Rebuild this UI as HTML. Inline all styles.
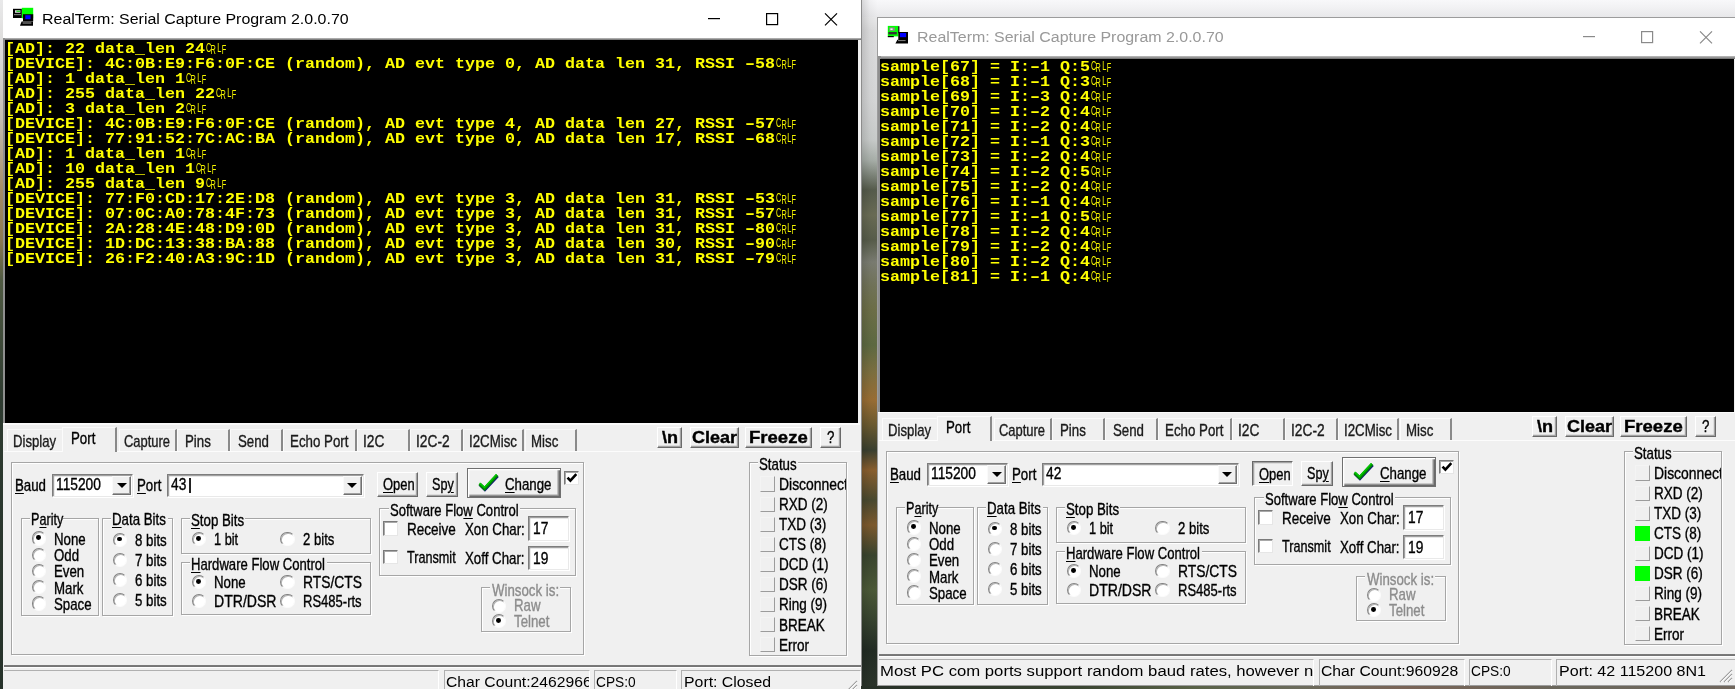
<!DOCTYPE html>
<html><head><meta charset="utf-8"><title>RealTerm</title><style>
*{box-sizing:border-box;margin:0;padding:0}
html,body{width:1735px;height:689px;overflow:hidden}
body{position:relative;font-family:"Liberation Sans", sans-serif;background:#6a6a55;}
.bg{position:absolute;left:0;top:0;width:1735px;height:689px;
 background:linear-gradient(180deg,#f4f4f5 0px,#eaeaeb 17px,#dededf 30px,#d6d7d8 100px,#c9cccb 140px,#a9b0aa 160px,#7c8378 176px,#565c4c 190px,#6a6c55 215px,#585d4b 240px,#7b7d72 262px,#72745a 285px,#6d6f48 310px,#5e6a42 345px,#7d7040 372px,#9a6e34 400px,#6b5a30 425px,#3a4030 450px,#8a5f2e 470px,#4a4a30 500px,#7d5a2e 525px,#3a452f 555px,#4c5a38 590px,#34402e 625px,#222c24 650px,#2c352b 689px);}
.bgl{position:absolute;left:0;top:0;width:4px;height:689px;background:linear-gradient(180deg,#e9e9ea 0px,#d9d8d6 60px,#c4bdb0 120px,#a58d66 190px,#8c7a52 240px,#4f5a42 280px,#2e3b30 400px,#26322a 689px);}
.win{position:absolute;background:#f0f0f0;overflow:hidden}
.tb{position:absolute;left:0;top:0;right:0;background:#fff}
.ttl{position:absolute;white-space:nowrap;font:15.4px/16px "Liberation Sans", sans-serif;transform-origin:0 0}
.term{position:absolute;background:#000;overflow:hidden}
.ln{position:absolute;left:0;height:15px;white-space:pre;font:bold 15px/15px "Liberation Mono", monospace;color:#ffff00;transform:scaleX(1.111);transform-origin:0 0}
.c{display:inline-block;position:relative;width:9.001px;height:15px;vertical-align:top}
.c i,.c b{position:absolute;font:normal 12px/12px "Liberation Sans", sans-serif;color:#f4f400;transform:scaleX(.55);transform-origin:0 0}
.c i{left:1.3px;top:-.4px}
.c b{left:5.4px;top:1.8px}
.c.d i{left:1.9px}
.c.d b{left:6.1px}
.h{display:inline-block;transform:scaleX(1.55)}
.pan{position:absolute;width:0;height:0}
.l{position:absolute;white-space:nowrap;font:15.7px/16px "Liberation Sans", sans-serif;color:#000;transform-origin:0 0;transform:scaleX(.846);-webkit-text-stroke-width:.35px;filter:blur(.35px)}
.l u{text-decoration:underline;text-decoration-thickness:1px;text-underline-offset:1.5px}
.g{position:absolute;border:1px solid #a6a6a6;box-shadow:1px 1px 0 #fff,inset 1px 1px 0 #fff}
.gl{position:absolute;background:#f0f0f0;height:14px}
.r{position:absolute;width:14.4px;height:14.4px;border-radius:50%;background:#fff;border:1.6px solid;border-color:#838383 #fbfbfb #fbfbfb #838383;box-shadow:inset .9px .9px 0 #b4b4b4}
.r.on::after{content:"";position:absolute;left:3.2px;top:3.2px;width:4.8px;height:4.8px;border-radius:50%;background:#000}
.cb{position:absolute;background:#fff;border:1.5px solid;border-color:#7a7a7a #e6e6e6 #e6e6e6 #7a7a7a;box-shadow:inset 1px 1px 0 #a8a8a8}
.ed{position:absolute;background:#fff;border:1.5px solid;border-color:#7d7d7d #e9e9e9 #e9e9e9 #7d7d7d;box-shadow:inset 1.2px 1.2px 0 #a0a0a0,1px 1px 0 #fff}
.bt{position:absolute;background:#f0f0f0;border:1.3px solid;border-color:#fff #6a6a6a #6a6a6a #fff;box-shadow:inset -1.2px -1.2px 0 #a3a3a3}
.dd{position:absolute;background:#f0f0f0;border:1.2px solid;border-color:#fafafa #707070 #707070 #fafafa;box-shadow:inset -1px -1px 0 #a0a0a0}
.dd::after{content:"";position:absolute;left:50%;top:50%;margin:-2.4px 0 0 -5px;border:5px solid transparent;border-top:5.4px solid #000;border-bottom:0}
.tab{position:absolute;background:#f0f0f0;border-left:1.3px solid #fbfbfb;border-top:1.3px solid #fbfbfb;border-right:2.4px solid #8a8a8a}
.led{position:absolute;width:15.6px;height:15.2px;background:#f0f0f0;border:1.4px solid;border-color:#f4f4f4 #9c9c9c #9c9c9c #f4f4f4}
.led.on{background:#00ff00;border-color:#00ff00}
.sb{position:absolute;background:#f0f0f0}
.sp{position:absolute;border-top:1.3px solid #b0b0b0;border-left:1.3px solid #b0b0b0;border-right:1px solid #fff;overflow:hidden}
.st{position:absolute;white-space:nowrap;font:15.5px/16px "Liberation Sans", sans-serif;color:#000;transform-origin:0 0}
</style></head><body>
<div class="bg"></div><div class="bgl"></div>
<div style="position:absolute;left:861px;top:0;width:874px;height:17px;background:linear-gradient(180deg,#f8f8fa,#f1f1f3 8px,#e8e8ea)"></div>
<div style="position:absolute;left:862px;top:0;width:16px;height:689px;background:linear-gradient(90deg,rgba(0,0,0,.13),rgba(0,0,0,.03) 8px,rgba(0,0,0,0))"></div>
<div class="win" style="left:3.4px;top:-1px;width:857.6px;height:700px"></div>
<div style="position:absolute;left:3.4px;top:0;width:857.6px;height:38px;background:#fff"></div>
<svg style="position:absolute;left:12px;top:7px" width="23" height="20" viewBox="0 0 23 20"><rect x="9.8" y="0.8" width="11.4" height="10.5" fill="#00ff00"/><rect x="1" y="1.8" width="8.8" height="9.2" fill="#000"/><rect x="3" y="3.2" width="5.4" height="2.6" fill="#d8d8d8"/><rect x="4.4" y="3.6" width="3.6" height="1.4" fill="#30d030"/><rect x="2" y="7" width="7" height="1.2" fill="#777"/><rect x="11" y="7.2" width="10.2" height="7.2" fill="#000"/><rect x="13.3" y="8.2" width="5.3" height="4" fill="#0000ff"/><path d="M9.6 14.4 H21 V18.8 H8 Z" fill="#000"/><path d="M10.6 16 H19.4" stroke="#ccc" stroke-width=".8"/></svg>
<span class="ttl" style="left:41.9px;top:11.3px;color:#000;transform:scaleX(1.036)">RealTerm: Serial Capture Program 2.0.0.70</span>
<svg style="position:absolute;left:708px;top:12.6px" width="132" height="14" viewBox="0 0 132 14" fill="none" stroke="#000" stroke-width="1.2"><path d="M0 5.6 H12"/><rect x="58.6" y="0.6" width="11" height="11"/><path d="M117 0.4 L129 12.4 M129 0.4 L117 12.4"/></svg>
<div style="position:absolute;left:3.4px;top:38.1px;width:857.6px;height:2.2px;background:linear-gradient(#c0c0c0,#6b6b6b)"></div>
<div style="position:absolute;left:3.4px;top:38.4px;width:1.8px;height:385px;background:#8f8f8f"></div>
<div style="position:absolute;left:3.4px;top:423px;width:857px;height:1.6px;background:#fbfbfb"></div>
<div class="term" style="left:5px;top:40px;width:853.4px;height:383px">
<div class="ln" style="top:2.0px">[AD]: 22 data_len 24<span class="c"><i>C</i><b>R</b></span><span class="c d"><i>L</i><b>F</b></span></div>
<div class="ln" style="top:17.0px">[DEVICE]: 4C:0B:E9:F6:0F:CE (random), AD evt type 0, AD data len 31, RSSI <span class="h">-</span>58<span class="c"><i>C</i><b>R</b></span><span class="c d"><i>L</i><b>F</b></span></div>
<div class="ln" style="top:32.0px">[AD]: 1 data_len 1<span class="c"><i>C</i><b>R</b></span><span class="c d"><i>L</i><b>F</b></span></div>
<div class="ln" style="top:47.0px">[AD]: 255 data_len 22<span class="c"><i>C</i><b>R</b></span><span class="c d"><i>L</i><b>F</b></span></div>
<div class="ln" style="top:62.0px">[AD]: 3 data_len 2<span class="c"><i>C</i><b>R</b></span><span class="c d"><i>L</i><b>F</b></span></div>
<div class="ln" style="top:77.0px">[DEVICE]: 4C:0B:E9:F6:0F:CE (random), AD evt type 4, AD data len 27, RSSI <span class="h">-</span>57<span class="c"><i>C</i><b>R</b></span><span class="c d"><i>L</i><b>F</b></span></div>
<div class="ln" style="top:92.0px">[DEVICE]: 77:91:52:7C:AC:BA (random), AD evt type 0, AD data len 17, RSSI <span class="h">-</span>68<span class="c"><i>C</i><b>R</b></span><span class="c d"><i>L</i><b>F</b></span></div>
<div class="ln" style="top:107.0px">[AD]: 1 data_len 1<span class="c"><i>C</i><b>R</b></span><span class="c d"><i>L</i><b>F</b></span></div>
<div class="ln" style="top:122.0px">[AD]: 10 data_len 1<span class="c"><i>C</i><b>R</b></span><span class="c d"><i>L</i><b>F</b></span></div>
<div class="ln" style="top:137.0px">[AD]: 255 data_len 9<span class="c"><i>C</i><b>R</b></span><span class="c d"><i>L</i><b>F</b></span></div>
<div class="ln" style="top:152.0px">[DEVICE]: 77:F0:CD:17:2E:D8 (random), AD evt type 3, AD data len 31, RSSI <span class="h">-</span>53<span class="c"><i>C</i><b>R</b></span><span class="c d"><i>L</i><b>F</b></span></div>
<div class="ln" style="top:167.0px">[DEVICE]: 07:0C:A0:78:4F:73 (random), AD evt type 3, AD data len 31, RSSI <span class="h">-</span>57<span class="c"><i>C</i><b>R</b></span><span class="c d"><i>L</i><b>F</b></span></div>
<div class="ln" style="top:182.0px">[DEVICE]: 2A:28:4E:48:D9:0D (random), AD evt type 3, AD data len 31, RSSI <span class="h">-</span>80<span class="c"><i>C</i><b>R</b></span><span class="c d"><i>L</i><b>F</b></span></div>
<div class="ln" style="top:197.0px">[DEVICE]: 1D:DC:13:38:BA:88 (random), AD evt type 3, AD data len 30, RSSI <span class="h">-</span>90<span class="c"><i>C</i><b>R</b></span><span class="c d"><i>L</i><b>F</b></span></div>
<div class="ln" style="top:212.0px">[DEVICE]: 26:F2:40:A3:9C:1D (random), AD evt type 3, AD data len 31, RSSI <span class="h">-</span>79<span class="c"><i>C</i><b>R</b></span><span class="c d"><i>L</i><b>F</b></span></div>
</div>
<div style="position:absolute;left:861px;top:0;width:1px;height:689px;background:#8c8c8c"></div>
<div class="pan" style="left:0px;top:0px">
<div style="position:absolute;left:4px;top:451.2px;width:856px;height:1.3px;background:#fcfcfc"></div>
<div class="tab" style="left:7px;top:429.3px;width:55.5px;height:21.899999999999977px;border-right-color:#f0f0f0;"></div>
<span class="l" style="left:13.0px;top:433.5px;transform:scaleX(0.836);color:#1a1a1a;">Display</span>
<div class="tab" style="left:62px;top:426.8px;width:55.3px;height:25.399999999999977px;"></div>
<span class="l" style="left:71.0px;top:431.1px;color:#000;">Port</span>
<div class="tab" style="left:119px;top:429.3px;width:57.5px;height:21.899999999999977px;"></div>
<span class="l" style="left:123.6px;top:433.5px;transform:scaleX(0.825);color:#1a1a1a;">Capture</span>
<div class="tab" style="left:177px;top:429.3px;width:52.5px;height:21.899999999999977px;"></div>
<span class="l" style="left:184.5px;top:433.5px;color:#1a1a1a;">Pins</span>
<div class="tab" style="left:230px;top:429.3px;width:52.5px;height:21.899999999999977px;"></div>
<span class="l" style="left:237.5px;top:433.5px;color:#1a1a1a;">Send</span>
<div class="tab" style="left:283px;top:429.3px;width:73.5px;height:21.899999999999977px;"></div>
<span class="l" style="left:290.0px;top:433.5px;transform:scaleX(0.849);color:#1a1a1a;">Echo Port</span>
<div class="tab" style="left:357px;top:429.3px;width:52.5px;height:21.899999999999977px;"></div>
<span class="l" style="left:363.0px;top:433.5px;transform:scaleX(0.876);color:#1a1a1a;">I2C</span>
<div class="tab" style="left:410px;top:429.3px;width:52.5px;height:21.899999999999977px;"></div>
<span class="l" style="left:416.0px;top:433.5px;transform:scaleX(0.876);color:#1a1a1a;">I2C-2</span>
<div class="tab" style="left:463px;top:429.3px;width:61.10000000000002px;height:21.899999999999977px;"></div>
<span class="l" style="left:468.5px;top:433.5px;color:#1a1a1a;">I2CMisc</span>
<div class="tab" style="left:525px;top:429.3px;width:51.5px;height:21.899999999999977px;"></div>
<span class="l" style="left:531.0px;top:433.5px;color:#1a1a1a;">Misc</span>
<div class="bt" style="left:657.3px;top:427px;width:24.700000000000045px;height:20.6px;overflow:hidden"></div>
<span class="l" style="left:662.0px;top:430.2px;transform:scaleX(1.151);font-weight:bold;">\n</span>
<div class="bt" style="left:689.8px;top:427px;width:49.60000000000002px;height:20.6px;overflow:hidden"></div>
<span class="l" style="left:692.3px;top:430.2px;transform:scaleX(1.146);font-weight:bold;">Clear</span>
<div class="bt" style="left:745px;top:427px;width:66.70000000000005px;height:20.6px;overflow:hidden"></div>
<span class="l" style="left:749.0px;top:430.2px;transform:scaleX(1.182);font-weight:bold;">Freeze</span>
<div class="bt" style="left:820px;top:427px;width:20.799999999999955px;height:20.6px;overflow:hidden"></div>
<span class="l" style="left:827.0px;top:429.7px;">?</span>
<div class="g" style="left:10.6px;top:461.6px;width:573.6px;height:193.6px"></div>
<span class="l" style="left:15.0px;top:478.2px;"><u>B</u>aud</span>
<div class="ed" style="left:52px;top:473.6px;width:81.2px;height:23.6px"></div>
<span class="l" style="left:56.0px;top:476.8px;transform:scaleX(0.878);">115200</span>
<div class="dd" style="left:112.3px;top:476px;width:18.8px;height:19px"></div>
<span class="l" style="left:137.0px;top:478.2px;"><u>P</u>ort</span>
<div class="ed" style="left:167px;top:473.6px;width:196.6px;height:23.6px"></div>
<span class="l" style="left:171.0px;top:476.8px;transform:scaleX(0.878);">43</span>
<div style="position:absolute;left:189.3px;top:477.5px;width:1.3px;height:15px;background:#222"></div>
<div class="dd" style="left:342.8px;top:476px;width:18.8px;height:19px"></div>
<div class="bt" style="left:377px;top:472px;width:41.3px;height:25px"></div>
<span class="l" style="left:383.0px;top:477.3px;transform:scaleX(0.825);"><u>O</u>pen</span>
<div class="bt" style="left:426px;top:472px;width:32.3px;height:25px"></div>
<span class="l" style="left:431.7px;top:477.3px;transform:scaleX(0.805);">Sp<u>y</u></span>
<div class="bt" style="left:467px;top:468px;width:93.6px;height:29.8px;border-color:#6f6f6f;border-width:1.3px;box-shadow:inset 1.3px 1.3px 0 #fff,inset -1.3px -1.3px 0 #6a6a6a,inset -2.6px -2.6px 0 #a3a3a3"></div>
<svg style="position:absolute;left:477px;top:472px" width="24" height="22" viewBox="0 0 24 22" fill="none" stroke-linejoin="miter"><path d="M2.9 12.6 L7.9 17.5 L20.6 3.9" stroke="#10107a" stroke-width="3.2"/><path d="M2.5 11.9 L7.6 16.7 L20.1 3" stroke="#008a00" stroke-width="3.3"/><path d="M2.6 11 L7.5 15.5 L19.6 2.4" stroke="#00d000" stroke-width="1.3"/></svg>
<span class="l" style="left:505.0px;top:476.7px;"><u>C</u>hange</span>
<div class="cb" style="left:563.6px;top:470.7px;width:15.6px;height:14.8px"></div>
<svg style="position:absolute;left:565.5px;top:472.6px" width="12" height="11" viewBox="0 0 12 11"><path d="M1.5 4.6 L4.4 7.6 L10.3 1.2" fill="none" stroke="#000" stroke-width="2.6"/></svg>
<div class="g" style="left:21.0px;top:518.0px;width:78.0px;height:98.0px"></div>
<div class="gl" style="left:29.5px;top:512.0px;width:33.4px"></div>
<span class="l" style="left:31.0px;top:512.4px;transform:scaleX(0.805);">P<u>a</u>rity</span>
<div class="r on" style="left:31.8px;top:531.2px"></div>
<span class="l" style="left:54.0px;top:531.8px;">None</span>
<div class="r" style="left:31.8px;top:547.5px"></div>
<span class="l" style="left:54.0px;top:548.1px;">Odd</span>
<div class="r" style="left:31.8px;top:563.7px"></div>
<span class="l" style="left:54.0px;top:564.3px;">Even</span>
<div class="r" style="left:31.8px;top:580.0px"></div>
<span class="l" style="left:54.0px;top:580.6px;">Mark</span>
<div class="r" style="left:31.8px;top:596.2px"></div>
<span class="l" style="left:54.0px;top:596.8px;">Space</span>
<div class="g" style="left:102.0px;top:518.0px;width:71.0px;height:98.0px"></div>
<div class="gl" style="left:110.5px;top:512.0px;width:57.0px"></div>
<span class="l" style="left:112.0px;top:512.4px;"><u>D</u>ata Bits</span>
<div class="r on" style="left:113.0px;top:532.5px"></div>
<span class="l" style="left:135.0px;top:532.5px;">8 bits</span>
<div class="r" style="left:113.0px;top:552.6px"></div>
<span class="l" style="left:135.0px;top:552.6px;">7 bits</span>
<div class="r" style="left:113.0px;top:572.6px"></div>
<span class="l" style="left:135.0px;top:572.6px;">6 bits</span>
<div class="r" style="left:113.0px;top:592.7px"></div>
<span class="l" style="left:135.0px;top:592.7px;">5 bits</span>
<div class="g" style="left:181.0px;top:518.0px;width:190.0px;height:36.0px"></div>
<div class="gl" style="left:189.5px;top:512.0px;width:55.0px"></div>
<span class="l" style="left:191.0px;top:513.0px;"><u>S</u>top Bits</span>
<div class="r on" style="left:191.8px;top:532.1px"></div>
<span class="l" style="left:214.0px;top:532.1px;transform:scaleX(0.815);">1 bit</span>
<div class="r" style="left:280.3px;top:532.1px"></div>
<span class="l" style="left:302.5px;top:532.1px;transform:scaleX(0.836);">2 bits</span>
<div class="g" style="left:181.0px;top:562.0px;width:190.0px;height:53.4px"></div>
<div class="gl" style="left:189.5px;top:556.0px;width:137.0px"></div>
<span class="l" style="left:191.0px;top:557.3px;transform:scaleX(0.835);"><u>H</u>ardware Flow Control</span>
<div class="r on" style="left:191.8px;top:574.7px"></div>
<span class="l" style="left:214.0px;top:574.9px;">None</span>
<div class="r" style="left:280.3px;top:574.7px"></div>
<span class="l" style="left:302.5px;top:574.9px;transform:scaleX(0.882);">RTS/CTS</span>
<div class="r" style="left:191.8px;top:593.9px"></div>
<span class="l" style="left:213.5px;top:594.1px;transform:scaleX(0.896);">DTR/DSR</span>
<div class="r" style="left:280.3px;top:593.9px"></div>
<span class="l" style="left:302.5px;top:594.1px;transform:scaleX(0.830);">RS485-rts</span>
<div class="g" style="left:379.0px;top:508.0px;width:197.0px;height:68.0px"></div>
<div class="gl" style="left:388.5px;top:502.0px;width:131.6px"></div>
<span class="l" style="left:390.0px;top:503.2px;transform:scaleX(0.833);">Software Flo<u>w</u> Control</span>
<div class="cb" style="left:383.2px;top:521px;width:15.3px;height:14.6px"></div>
<span class="l" style="left:406.7px;top:521.6px;transform:scaleX(0.861);">Receive</span>
<span class="l" style="left:465.4px;top:522.2px;">Xon Char:</span>
<div class="ed" style="left:528px;top:516px;width:41.2px;height:24.8px"></div>
<span class="l" style="left:533.0px;top:521.2px;transform:scaleX(0.878);">17</span>
<div class="cb" style="left:383.2px;top:549.8px;width:15.3px;height:14.6px"></div>
<span class="l" style="left:406.7px;top:549.8px;transform:scaleX(0.805);">Transmit</span>
<span class="l" style="left:465.4px;top:551.0px;">Xoff Char:</span>
<div class="ed" style="left:528px;top:545.6px;width:41.2px;height:24.8px"></div>
<span class="l" style="left:533.0px;top:550.5px;transform:scaleX(0.878);">19</span>
<div class="g" style="left:481.0px;top:587.0px;width:90.0px;height:45.2px"></div>
<div class="gl" style="left:490.3px;top:581.0px;width:69.6px"></div>
<span class="l" style="left:491.8px;top:582.6px;color:#8c8c8c;">Winsock is:</span>
<div class="r" style="left:492.0px;top:598.5px"></div>
<span class="l" style="left:514.2px;top:598.3px;color:#8c8c8c;">Raw</span>
<div class="r on" style="left:492.0px;top:613.6px"></div>
<span class="l" style="left:514.2px;top:613.5px;color:#8c8c8c;">Telnet</span>
<div class="g" style="left:749.0px;top:462.0px;width:98.0px;height:194.0px"></div>
<div class="gl" style="left:757.5px;top:456.0px;width:40.3px"></div>
<span class="l" style="left:759.0px;top:457.4px;">Status</span>
<div class="led" style="left:759.5px;top:476.4px"></div>
<span class="l" style="left:779.2px;top:477.0px;transform:scaleX(0.887);">Disconnect</span>
<div class="led" style="left:759.5px;top:496.5px"></div>
<span class="l" style="left:779.2px;top:497.1px;transform:scaleX(0.861);">RXD (2)</span>
<div class="led" style="left:759.5px;top:516.5px"></div>
<span class="l" style="left:779.2px;top:517.1px;transform:scaleX(0.861);">TXD (3)</span>
<div class="led" style="left:759.5px;top:536.6px"></div>
<span class="l" style="left:779.2px;top:537.2px;transform:scaleX(0.861);">CTS (8)</span>
<div class="led" style="left:759.5px;top:556.7px"></div>
<span class="l" style="left:779.2px;top:557.3px;transform:scaleX(0.861);">DCD (1)</span>
<div class="led" style="left:759.5px;top:576.8px"></div>
<span class="l" style="left:779.2px;top:577.4px;transform:scaleX(0.861);">DSR (6)</span>
<div class="led" style="left:759.5px;top:596.8px"></div>
<span class="l" style="left:779.2px;top:597.4px;transform:scaleX(0.861);">Ring (9)</span>
<div class="led" style="left:759.5px;top:616.9px"></div>
<span class="l" style="left:779.2px;top:617.5px;transform:scaleX(0.861);">BREAK</span>
<div class="led" style="left:759.5px;top:637.0px"></div>
<span class="l" style="left:779.2px;top:637.6px;transform:scaleX(0.861);">Error</span>
<div style="position:absolute;left:845.6px;top:470px;width:1px;height:30px;background:#a6a6a6"></div><div style="position:absolute;left:846.6px;top:470px;width:14px;height:30px;background:#f0f0f0"></div><div style="position:absolute;left:846.6px;top:470px;width:1px;height:30px;background:#fff"></div>
</div>
<div class="sb" style="left:4px;top:664.6px;width:857px;height:30px">
<div style="position:absolute;left:0;top:0;width:100%;height:2.2px;background:linear-gradient(#8c8c8c,#5f5f5f 60%,#9a9a9a)"></div>
<div style="position:absolute;left:0;top:2.2px;width:100%;height:1.2px;background:#fdfdfd"></div>
<div class="sp" style="left:0px;top:5px;width:435.4px;height:30px;border-left:0;"><span class="st" style="left:-5.3px;top:3.7px;transform:scaleX(1)"></span></div>
<div class="sp" style="left:439.6px;top:5px;width:146.39999999999998px;height:30px;"><span class="st" style="left:1.8px;top:3.7px;transform:scaleX(1.012)">Char Count:2462966</span></div>
<div class="sp" style="left:589.6px;top:5px;width:83.29999999999995px;height:30px;"><span class="st" style="left:1.5px;top:3.7px;transform:scaleX(0.885)">CPS:0</span></div>
<div class="sp" style="left:677px;top:5px;width:180px;height:30px;"><span class="st" style="left:1.5px;top:3.7px;transform:scaleX(1.022)">Port: Closed</span></div>
<svg style="position:absolute;left:838px;top:13px" width="16" height="16" viewBox="0 0 16 16"><path d="M15 3 L3 15 M15 7 L7 15 M15 11 L11 15" stroke="#a0a0a0" stroke-width="1.2"/><path d="M15 4.2 L4.2 15 M15 8.2 L8.2 15 M15 12.2 L12.2 15" stroke="#fff" stroke-width="1"/></svg>
</div>
<div class="win" style="left:877px;top:17px;width:858px;height:668.6px;border:1px solid #9c9c9c;border-right:0"></div>
<div style="position:absolute;left:878px;top:18px;width:857px;height:38px;background:#fff"></div>
<svg style="position:absolute;left:887px;top:25px" width="22" height="20" viewBox="0 0 22 20"><rect x="0.8" y="0.9" width="10.6" height="10.5" fill="#00ff00"/><rect x="11.2" y="1.2" width="1.2" height="7" fill="#000"/><rect x="0.8" y="11" width="6" height="1.2" fill="#000"/><rect x="2.2" y="2.4" width="5.6" height="3.4" fill="#8a8a8a"/><rect x="3.4" y="3.4" width="2.2" height="1.6" fill="#f0f0f0"/><rect x="1.4" y="7" width="8.4" height="2.4" fill="#333"/><rect x="11.3" y="7" width="9.7" height="8.2" fill="#000"/><rect x="13" y="8" width="6.1" height="4.2" fill="#0000ff"/><path d="M10.4 14.8 H21 V18.4 H8.4 Z" fill="#000"/><path d="M11 15.6 H18.6" stroke="#bbb" stroke-width=".7"/></svg>
<span class="ttl" style="left:916.9px;top:29.4px;color:#999;transform:scaleX(1.036)">RealTerm: Serial Capture Program 2.0.0.70</span>
<svg style="position:absolute;left:1583px;top:30.6px" width="132" height="14" viewBox="0 0 132 14" fill="none" stroke="#8a8a8a" stroke-width="1.2"><path d="M0 5.6 H12"/><rect x="58.6" y="0.6" width="11" height="11"/><path d="M117 0.4 L129 12.4 M129 0.4 L117 12.4"/></svg>
<div style="position:absolute;left:878px;top:55.8px;width:857px;height:3px;background:linear-gradient(#c0c0c0,#6b6b6b)"></div>
<div style="position:absolute;left:878px;top:56.2px;width:2.6px;height:356px;background:#8f8f8f"></div>
<div style="position:absolute;left:878px;top:411.8px;width:857px;height:1.6px;background:#fbfbfb"></div>
<div class="term" style="left:880.4px;top:58.6px;width:853.2px;height:353.2px">
<div class="ln" style="top:1.6px">sample[67] = I:<span class="h">-</span>1 Q:5<span class="c"><i>C</i><b>R</b></span><span class="c d"><i>L</i><b>F</b></span></div>
<div class="ln" style="top:16.6px">sample[68] = I:<span class="h">-</span>1 Q:3<span class="c"><i>C</i><b>R</b></span><span class="c d"><i>L</i><b>F</b></span></div>
<div class="ln" style="top:31.6px">sample[69] = I:<span class="h">-</span>3 Q:4<span class="c"><i>C</i><b>R</b></span><span class="c d"><i>L</i><b>F</b></span></div>
<div class="ln" style="top:46.6px">sample[70] = I:<span class="h">-</span>2 Q:4<span class="c"><i>C</i><b>R</b></span><span class="c d"><i>L</i><b>F</b></span></div>
<div class="ln" style="top:61.6px">sample[71] = I:<span class="h">-</span>2 Q:4<span class="c"><i>C</i><b>R</b></span><span class="c d"><i>L</i><b>F</b></span></div>
<div class="ln" style="top:76.6px">sample[72] = I:<span class="h">-</span>1 Q:3<span class="c"><i>C</i><b>R</b></span><span class="c d"><i>L</i><b>F</b></span></div>
<div class="ln" style="top:91.6px">sample[73] = I:<span class="h">-</span>2 Q:4<span class="c"><i>C</i><b>R</b></span><span class="c d"><i>L</i><b>F</b></span></div>
<div class="ln" style="top:106.6px">sample[74] = I:<span class="h">-</span>2 Q:5<span class="c"><i>C</i><b>R</b></span><span class="c d"><i>L</i><b>F</b></span></div>
<div class="ln" style="top:121.6px">sample[75] = I:<span class="h">-</span>2 Q:4<span class="c"><i>C</i><b>R</b></span><span class="c d"><i>L</i><b>F</b></span></div>
<div class="ln" style="top:136.6px">sample[76] = I:<span class="h">-</span>1 Q:4<span class="c"><i>C</i><b>R</b></span><span class="c d"><i>L</i><b>F</b></span></div>
<div class="ln" style="top:151.6px">sample[77] = I:<span class="h">-</span>1 Q:5<span class="c"><i>C</i><b>R</b></span><span class="c d"><i>L</i><b>F</b></span></div>
<div class="ln" style="top:166.6px">sample[78] = I:<span class="h">-</span>2 Q:4<span class="c"><i>C</i><b>R</b></span><span class="c d"><i>L</i><b>F</b></span></div>
<div class="ln" style="top:181.6px">sample[79] = I:<span class="h">-</span>2 Q:4<span class="c"><i>C</i><b>R</b></span><span class="c d"><i>L</i><b>F</b></span></div>
<div class="ln" style="top:196.6px">sample[80] = I:<span class="h">-</span>2 Q:4<span class="c"><i>C</i><b>R</b></span><span class="c d"><i>L</i><b>F</b></span></div>
<div class="ln" style="top:211.6px">sample[81] = I:<span class="h">-</span>1 Q:4<span class="c"><i>C</i><b>R</b></span><span class="c d"><i>L</i><b>F</b></span></div>
</div>
<div class="pan" style="left:875px;top:-11px">
<div style="position:absolute;left:4px;top:451.2px;width:856px;height:1.3px;background:#fcfcfc"></div>
<div class="tab" style="left:7px;top:429.3px;width:55.5px;height:21.899999999999977px;border-right-color:#f0f0f0;"></div>
<span class="l" style="left:13.0px;top:433.5px;transform:scaleX(0.836);color:#1a1a1a;">Display</span>
<div class="tab" style="left:62px;top:426.8px;width:55.3px;height:25.399999999999977px;"></div>
<span class="l" style="left:71.0px;top:431.1px;color:#000;">Port</span>
<div class="tab" style="left:119px;top:429.3px;width:57.5px;height:21.899999999999977px;"></div>
<span class="l" style="left:123.6px;top:433.5px;transform:scaleX(0.825);color:#1a1a1a;">Capture</span>
<div class="tab" style="left:177px;top:429.3px;width:52.5px;height:21.899999999999977px;"></div>
<span class="l" style="left:184.5px;top:433.5px;color:#1a1a1a;">Pins</span>
<div class="tab" style="left:230px;top:429.3px;width:52.5px;height:21.899999999999977px;"></div>
<span class="l" style="left:237.5px;top:433.5px;color:#1a1a1a;">Send</span>
<div class="tab" style="left:283px;top:429.3px;width:73.5px;height:21.899999999999977px;"></div>
<span class="l" style="left:290.0px;top:433.5px;transform:scaleX(0.849);color:#1a1a1a;">Echo Port</span>
<div class="tab" style="left:357px;top:429.3px;width:52.5px;height:21.899999999999977px;"></div>
<span class="l" style="left:363.0px;top:433.5px;transform:scaleX(0.876);color:#1a1a1a;">I2C</span>
<div class="tab" style="left:410px;top:429.3px;width:52.5px;height:21.899999999999977px;"></div>
<span class="l" style="left:416.0px;top:433.5px;transform:scaleX(0.876);color:#1a1a1a;">I2C-2</span>
<div class="tab" style="left:463px;top:429.3px;width:61.10000000000002px;height:21.899999999999977px;"></div>
<span class="l" style="left:468.5px;top:433.5px;color:#1a1a1a;">I2CMisc</span>
<div class="tab" style="left:525px;top:429.3px;width:51.5px;height:21.899999999999977px;"></div>
<span class="l" style="left:531.0px;top:433.5px;color:#1a1a1a;">Misc</span>
<div class="bt" style="left:657.3px;top:427px;width:24.700000000000045px;height:20.6px;overflow:hidden"></div>
<span class="l" style="left:662.0px;top:430.2px;transform:scaleX(1.151);font-weight:bold;">\n</span>
<div class="bt" style="left:689.8px;top:427px;width:49.60000000000002px;height:20.6px;overflow:hidden"></div>
<span class="l" style="left:692.3px;top:430.2px;transform:scaleX(1.146);font-weight:bold;">Clear</span>
<div class="bt" style="left:745px;top:427px;width:66.70000000000005px;height:20.6px;overflow:hidden"></div>
<span class="l" style="left:749.0px;top:430.2px;transform:scaleX(1.182);font-weight:bold;">Freeze</span>
<div class="bt" style="left:820px;top:427px;width:20.799999999999955px;height:20.6px;overflow:hidden"></div>
<span class="l" style="left:827.0px;top:429.7px;">?</span>
<div class="g" style="left:10.6px;top:461.6px;width:573.6px;height:193.6px"></div>
<span class="l" style="left:15.0px;top:478.2px;"><u>B</u>aud</span>
<div class="ed" style="left:52px;top:473.6px;width:81.2px;height:23.6px"></div>
<span class="l" style="left:56.0px;top:476.8px;transform:scaleX(0.878);">115200</span>
<div class="dd" style="left:112.3px;top:476px;width:18.8px;height:19px"></div>
<span class="l" style="left:137.0px;top:478.2px;"><u>P</u>ort</span>
<div class="ed" style="left:167px;top:473.6px;width:196.6px;height:23.6px"></div>
<span class="l" style="left:171.0px;top:476.8px;transform:scaleX(0.878);">42</span>
<div class="dd" style="left:342.8px;top:476px;width:18.8px;height:19px"></div>
<div class="bt" style="left:377px;top:472px;width:41.3px;height:25px;border-color:#6a6a6a #fff #fff #6a6a6a;box-shadow:inset 1.3px 1.3px 0 #a3a3a3"></div>
<span class="l" style="left:384.0px;top:478.3px;transform:scaleX(0.825);"><u>O</u>pen</span>
<div class="bt" style="left:426px;top:472px;width:32.3px;height:25px"></div>
<span class="l" style="left:431.7px;top:477.3px;transform:scaleX(0.805);">Sp<u>y</u></span>
<div class="bt" style="left:467px;top:468px;width:93.6px;height:29.8px;border-color:#6f6f6f;border-width:1.3px;box-shadow:inset 1.3px 1.3px 0 #fff,inset -1.3px -1.3px 0 #6a6a6a,inset -2.6px -2.6px 0 #a3a3a3"></div>
<svg style="position:absolute;left:477px;top:472px" width="24" height="22" viewBox="0 0 24 22" fill="none" stroke-linejoin="miter"><path d="M2.9 12.6 L7.9 17.5 L20.6 3.9" stroke="#10107a" stroke-width="3.2"/><path d="M2.5 11.9 L7.6 16.7 L20.1 3" stroke="#008a00" stroke-width="3.3"/><path d="M2.6 11 L7.5 15.5 L19.6 2.4" stroke="#00d000" stroke-width="1.3"/></svg>
<span class="l" style="left:505.0px;top:476.7px;"><u>C</u>hange</span>
<div class="cb" style="left:563.6px;top:470.7px;width:15.6px;height:14.8px"></div>
<svg style="position:absolute;left:565.5px;top:472.6px" width="12" height="11" viewBox="0 0 12 11"><path d="M1.5 4.6 L4.4 7.6 L10.3 1.2" fill="none" stroke="#000" stroke-width="2.6"/></svg>
<div class="g" style="left:21.0px;top:518.0px;width:78.0px;height:98.0px"></div>
<div class="gl" style="left:29.5px;top:512.0px;width:33.4px"></div>
<span class="l" style="left:31.0px;top:512.4px;transform:scaleX(0.805);">P<u>a</u>rity</span>
<div class="r on" style="left:31.8px;top:531.2px"></div>
<span class="l" style="left:54.0px;top:531.8px;">None</span>
<div class="r" style="left:31.8px;top:547.5px"></div>
<span class="l" style="left:54.0px;top:548.1px;">Odd</span>
<div class="r" style="left:31.8px;top:563.7px"></div>
<span class="l" style="left:54.0px;top:564.3px;">Even</span>
<div class="r" style="left:31.8px;top:580.0px"></div>
<span class="l" style="left:54.0px;top:580.6px;">Mark</span>
<div class="r" style="left:31.8px;top:596.2px"></div>
<span class="l" style="left:54.0px;top:596.8px;">Space</span>
<div class="g" style="left:102.0px;top:518.0px;width:71.0px;height:98.0px"></div>
<div class="gl" style="left:110.5px;top:512.0px;width:57.0px"></div>
<span class="l" style="left:112.0px;top:512.4px;"><u>D</u>ata Bits</span>
<div class="r on" style="left:113.0px;top:532.5px"></div>
<span class="l" style="left:135.0px;top:532.5px;">8 bits</span>
<div class="r" style="left:113.0px;top:552.6px"></div>
<span class="l" style="left:135.0px;top:552.6px;">7 bits</span>
<div class="r" style="left:113.0px;top:572.6px"></div>
<span class="l" style="left:135.0px;top:572.6px;">6 bits</span>
<div class="r" style="left:113.0px;top:592.7px"></div>
<span class="l" style="left:135.0px;top:592.7px;">5 bits</span>
<div class="g" style="left:181.0px;top:518.0px;width:190.0px;height:36.0px"></div>
<div class="gl" style="left:189.5px;top:512.0px;width:55.0px"></div>
<span class="l" style="left:191.0px;top:513.0px;"><u>S</u>top Bits</span>
<div class="r on" style="left:191.8px;top:532.1px"></div>
<span class="l" style="left:214.0px;top:532.1px;transform:scaleX(0.815);">1 bit</span>
<div class="r" style="left:280.3px;top:532.1px"></div>
<span class="l" style="left:302.5px;top:532.1px;transform:scaleX(0.836);">2 bits</span>
<div class="g" style="left:181.0px;top:562.0px;width:190.0px;height:53.4px"></div>
<div class="gl" style="left:189.5px;top:556.0px;width:137.0px"></div>
<span class="l" style="left:191.0px;top:557.3px;transform:scaleX(0.835);"><u>H</u>ardware Flow Control</span>
<div class="r on" style="left:191.8px;top:574.7px"></div>
<span class="l" style="left:214.0px;top:574.9px;">None</span>
<div class="r" style="left:280.3px;top:574.7px"></div>
<span class="l" style="left:302.5px;top:574.9px;transform:scaleX(0.882);">RTS/CTS</span>
<div class="r" style="left:191.8px;top:593.9px"></div>
<span class="l" style="left:213.5px;top:594.1px;transform:scaleX(0.896);">DTR/DSR</span>
<div class="r" style="left:280.3px;top:593.9px"></div>
<span class="l" style="left:302.5px;top:594.1px;transform:scaleX(0.830);">RS485-rts</span>
<div class="g" style="left:379.0px;top:508.0px;width:197.0px;height:68.0px"></div>
<div class="gl" style="left:388.5px;top:502.0px;width:131.6px"></div>
<span class="l" style="left:390.0px;top:503.2px;transform:scaleX(0.833);">Software Flo<u>w</u> Control</span>
<div class="cb" style="left:383.2px;top:521px;width:15.3px;height:14.6px"></div>
<span class="l" style="left:406.7px;top:521.6px;transform:scaleX(0.861);">Receive</span>
<span class="l" style="left:465.4px;top:522.2px;">Xon Char:</span>
<div class="ed" style="left:528px;top:516px;width:41.2px;height:24.8px"></div>
<span class="l" style="left:533.0px;top:521.2px;transform:scaleX(0.878);">17</span>
<div class="cb" style="left:383.2px;top:549.8px;width:15.3px;height:14.6px"></div>
<span class="l" style="left:406.7px;top:549.8px;transform:scaleX(0.805);">Transmit</span>
<span class="l" style="left:465.4px;top:551.0px;">Xoff Char:</span>
<div class="ed" style="left:528px;top:545.6px;width:41.2px;height:24.8px"></div>
<span class="l" style="left:533.0px;top:550.5px;transform:scaleX(0.878);">19</span>
<div class="g" style="left:481.0px;top:587.0px;width:90.0px;height:45.2px"></div>
<div class="gl" style="left:490.3px;top:581.0px;width:69.6px"></div>
<span class="l" style="left:491.8px;top:582.6px;color:#8c8c8c;">Winsock is:</span>
<div class="r" style="left:492.0px;top:598.5px"></div>
<span class="l" style="left:514.2px;top:598.3px;color:#8c8c8c;">Raw</span>
<div class="r on" style="left:492.0px;top:613.6px"></div>
<span class="l" style="left:514.2px;top:613.5px;color:#8c8c8c;">Telnet</span>
<div class="g" style="left:749.0px;top:462.0px;width:98.0px;height:194.0px"></div>
<div class="gl" style="left:757.5px;top:456.0px;width:40.3px"></div>
<span class="l" style="left:759.0px;top:457.4px;">Status</span>
<div class="led" style="left:759.5px;top:476.4px"></div>
<span class="l" style="left:779.2px;top:477.0px;transform:scaleX(0.887);">Disconnect</span>
<div class="led" style="left:759.5px;top:496.5px"></div>
<span class="l" style="left:779.2px;top:497.1px;transform:scaleX(0.861);">RXD (2)</span>
<div class="led" style="left:759.5px;top:516.5px"></div>
<span class="l" style="left:779.2px;top:517.1px;transform:scaleX(0.861);">TXD (3)</span>
<div class="led on" style="left:759.5px;top:536.6px"></div>
<span class="l" style="left:779.2px;top:537.2px;transform:scaleX(0.861);">CTS (8)</span>
<div class="led" style="left:759.5px;top:556.7px"></div>
<span class="l" style="left:779.2px;top:557.3px;transform:scaleX(0.861);">DCD (1)</span>
<div class="led on" style="left:759.5px;top:576.8px"></div>
<span class="l" style="left:779.2px;top:577.4px;transform:scaleX(0.861);">DSR (6)</span>
<div class="led" style="left:759.5px;top:596.8px"></div>
<span class="l" style="left:779.2px;top:597.4px;transform:scaleX(0.861);">Ring (9)</span>
<div class="led" style="left:759.5px;top:616.9px"></div>
<span class="l" style="left:779.2px;top:617.5px;transform:scaleX(0.861);">BREAK</span>
<div class="led" style="left:759.5px;top:637.0px"></div>
<span class="l" style="left:779.2px;top:637.6px;transform:scaleX(0.861);">Error</span>
<div style="position:absolute;left:845.6px;top:470px;width:1px;height:30px;background:#a6a6a6"></div><div style="position:absolute;left:846.6px;top:470px;width:14px;height:30px;background:#f0f0f0"></div><div style="position:absolute;left:846.6px;top:470px;width:1px;height:30px;background:#fff"></div>
</div>
<div class="sb" style="left:879px;top:653.8px;width:857px;height:31.6px">
<div style="position:absolute;left:0;top:0;width:100%;height:2.2px;background:linear-gradient(#8c8c8c,#5f5f5f 60%,#9a9a9a)"></div>
<div style="position:absolute;left:0;top:2.2px;width:100%;height:1.2px;background:#fdfdfd"></div>
<div class="sp" style="left:0px;top:5px;width:435.4px;height:31.6px;border-left:0;"><span class="st" style="left:1.1px;top:3.7px;transform:scaleX(1.077)">Most PC com ports support random baud rates, however n</span></div>
<div class="sp" style="left:439.6px;top:5px;width:146.39999999999998px;height:31.6px;"><span class="st" style="left:1.3px;top:3.7px;transform:scaleX(1.014)">Char Count:960928</span></div>
<div class="sp" style="left:589.6px;top:5px;width:83.29999999999995px;height:31.6px;"><span class="st" style="left:1.5px;top:3.7px;transform:scaleX(0.885)">CPS:0</span></div>
<div class="sp" style="left:677px;top:5px;width:180px;height:31.6px;"><span class="st" style="left:1.5px;top:3.7px;transform:scaleX(1.036)">Port: 42 115200 8N1</span></div>
<svg style="position:absolute;left:838px;top:13px" width="16" height="16" viewBox="0 0 16 16"><path d="M15 3 L3 15 M15 7 L7 15 M15 11 L11 15" stroke="#a0a0a0" stroke-width="1.2"/><path d="M15 4.2 L4.2 15 M15 8.2 L8.2 15 M15 12.2 L12.2 15" stroke="#fff" stroke-width="1"/></svg>
</div>
<div style="position:absolute;left:861px;top:685.6px;width:874px;height:4px;background:linear-gradient(90deg,#262f26,#3a4532 25%,#596247 38%,#6b6b5c 50%,#7a6457 62%,#6a675c 80%,#70665c)"></div>
</body></html>
